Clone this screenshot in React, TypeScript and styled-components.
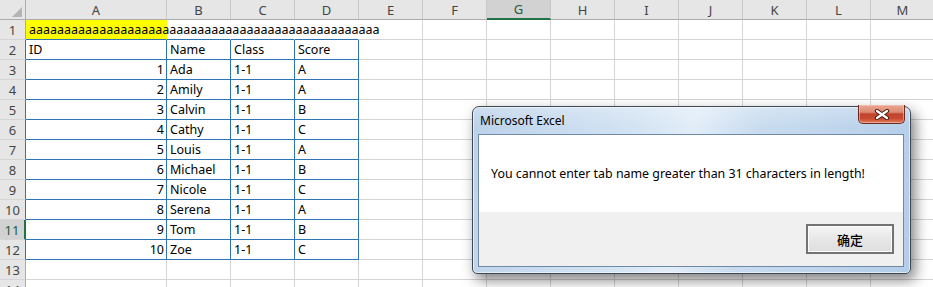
import React from "react";
import styled, { createGlobalStyle } from "styled-components";

const GlobalStyle = createGlobalStyle`
  html, body {
    margin: 0;
    padding: 0;
    background: #ffffff;
    overflow: hidden;
  }
  body {
    font-family: "Noto Sans", "Noto Sans CJK SC", sans-serif;
  }
`;

const GRID = "#d4d4d4";
const HEAD_LINE = "#c8c8c8";
const BLUE = "#2e75b6";
const GREEN = "#217346";

const COLS = ["A", "B", "C", "D", "E", "F", "G", "H", "I", "J", "K", "L", "M"];

const PEOPLE = [
  ["Ada", "A"],
  ["Amily", "A"],
  ["Calvin", "B"],
  ["Cathy", "C"],
  ["Louis", "A"],
  ["Michael", "B"],
  ["Nicole", "C"],
  ["Serena", "A"],
  ["Tom", "B"],
  ["Zoe", "C"],
];

// row index -> cell values (column 1 = A)
const DATA: Record<number, string[]> = {
  2: ["ID", "Name", "Class", "Score"],
};
PEOPLE.forEach(([name, score], i) => {
  DATA[i + 3] = [String(i + 1), name, "1-1", score];
});

const inTable = (r: number, c: number) => r >= 2 && r <= 12 && c >= 1 && c <= 4;

const Page = styled.div`
  position: relative;
  width: 933px;
  height: 287px;
  overflow: hidden;
`;

const Sheet = styled.div`
  display: grid;
  grid-template-columns: 26px 141px repeat(12, 64px);
  grid-auto-rows: 20px;
  font-size: 12.5px;
  color: #000;
`;

const HeadCell = styled.div<{ $sel?: boolean; $rb?: string; $bb?: string }>`
  box-sizing: border-box;
  display: flex;
  align-items: center;
  justify-content: center;
  background: ${(p) => (p.$sel ? "#d2d2d2" : "#e6e6e6")};
  color: ${(p) => (p.$sel ? "#1f5c3a" : "#444444")};
  border-right: 1px solid ${(p) => p.$rb || HEAD_LINE};
  border-bottom: 1px solid ${(p) => p.$bb || HEAD_LINE};
  font-size: 13px;
`;

const ColHead = styled(HeadCell)`
  border-bottom: ${(p) => (p.$sel ? `2px solid ${GREEN}` : `1px solid #ababab`)};
`;

const RowHead = styled(HeadCell)`
  border-right: ${(p) => (p.$sel ? `2px solid ${GREEN}` : `1px solid ${p.$rb || "#ababab"}`)};
`;

const Corner = styled.div`
  box-sizing: border-box;
  background: #e6e6e6;
  border-right: 1px solid #ababab;
  border-bottom: 1px solid #ababab;
  display: flex;
  align-items: flex-end;
  justify-content: flex-end;
  padding: 0 3px 2px 0;
`;

const Cell = styled.div<{ $rb: string; $bb: string; $bg?: string; $right?: boolean; $spill?: boolean }>`
  box-sizing: border-box;
  background: ${(p) => p.$bg || "#ffffff"};
  border-right: 1px solid ${(p) => p.$rb};
  border-bottom: 1px solid ${(p) => p.$bb};
  padding: 0 2px 0 3px;
  line-height: 19px;
  white-space: nowrap;
  text-align: ${(p) => (p.$right ? "right" : "left")};
  overflow: ${(p) => (p.$spill ? "visible" : "hidden")};
  ${(p) => (p.$spill ? "position: relative; z-index: 1;" : "")}
`;

/* ---------- dialog ---------- */

const Dialog = styled.div`
  position: absolute;
  left: 472px;
  top: 106px;
  width: 439px;
  height: 168px;
  box-sizing: border-box;
  border: 1px solid #3e4954;
  border-radius: 7px 7px 5px 5px;
  background: linear-gradient(
      to bottom,
      rgba(255, 255, 255, 0.25) 0px,
      rgba(255, 255, 255, 0) 20px
    ),
    linear-gradient(100deg, #bcd2ea 0%, #d3e3f3 35%, #e2edf8 48%, #c9dcef 62%, #b3cde9 100%);
  box-shadow: 4px 6px 14px rgba(0, 0, 0, 0.5), inset 0 0 0 1px rgba(255, 255, 255, 0.55);
  padding: 0 6px 6px 5px;
  display: flex;
  flex-direction: column;
  font-family: "Noto Sans", "Noto Sans CJK SC", sans-serif;
  z-index: 5;
`;

const TitleBar = styled.div`
  height: 27px;
  display: flex;
  justify-content: space-between;
  align-items: flex-start;
`;

const Title = styled.div`
  line-height: 27px;
  padding-left: 2px;
  font-size: 12px;
  color: #000;
`;

const CloseButton = styled.div`
  width: 47px;
  height: 19px;
  margin: -2px -1px 0 0;
  box-sizing: border-box;
  border: 1px solid #6b2a22;
  border-top: none;
  border-radius: 0 0 5px 5px;
  background: linear-gradient(
    to bottom,
    #e9a693 0%,
    #dd8a72 40%,
    #c2432c 50%,
    #c94a30 75%,
    #df7d5e 100%
  );
  box-shadow: inset 0 0 0 1px rgba(255, 210, 200, 0.5);
  display: flex;
  align-items: center;
  justify-content: center;
`;

const Client = styled.div`
  flex: 1;
  display: flex;
  flex-direction: column;
  border: 1px solid #6f89a6;
  background: #ffffff;
`;

const Message = styled.div`
  flex: 1;
  display: flex;
  align-items: center;
  padding-left: 12px;
  font-size: 12.4px;
  color: #000;
`;

const Footer = styled.div`
  height: 54px;
  box-sizing: border-box;
  background: #f0f0f0;
  display: flex;
  justify-content: flex-end;
  align-items: flex-start;
  padding: 12px 9px 0 0;
`;

const Button = styled.button`
  width: 88px;
  height: 30px;
  box-sizing: border-box;
  border: 2px solid #737373;
  background: linear-gradient(to bottom, #f5f5f5, #e7e7e7 50%, #dedede 100%);
  box-shadow: inset 0 0 0 1px #fbfbfb;
  font-family: "Noto Sans CJK SC", sans-serif;
  font-size: 13px;
  font-weight: 500;
  color: #000;
  padding: 0;
`;

const CloseGlyph = () => (
  <svg width="16" height="11" viewBox="0 0 16 11">
    <path d="M3 2 L13 9 M13 2 L3 9" stroke="#4a1a14" strokeWidth="4.2" strokeLinecap="round" />
    <path d="M3 2 L13 9 M13 2 L3 9" stroke="#ffffff" strokeWidth="2.2" strokeLinecap="round" />
  </svg>
);

const CornerMark = () => (
  <svg width="10" height="10" viewBox="0 0 10 10">
    <polygon points="10,0 10,10 0,10" fill="#b4b4b4" />
  </svg>
);

const ROWS = 14;

export default function App() {
  const cells: React.ReactNode[] = [];

  cells.push(
    <Corner key="corner">
      <CornerMark />
    </Corner>
  );
  COLS.forEach((c) => {
    cells.push(
      <ColHead key={`h${c}`} $sel={c === "G"}>
        {c}
      </ColHead>
    );
  });

  for (let r = 1; r <= ROWS; r++) {
    cells.push(
      <RowHead key={`r${r}`} $sel={r === 11} $rb={inTable(r, 1) ? BLUE : undefined} $bb="#d5d5d5">
        {r}
      </RowHead>
    );
    for (let c = 1; c <= COLS.length; c++) {
      const blueR = inTable(r, c) || inTable(r, c + 1);
      const blueB = inTable(r, c) || inTable(r + 1, c);
      let rb = blueR ? BLUE : GRID;
      const bb = blueB ? BLUE : GRID;
      let text = "";
      let bg: string | undefined;
      let spill = false;
      if (r === 1) {
        // A1 text spills over B1:E1, which hides those grid lines
        if (c <= 4) rb = c === 1 ? "#ffff00" : "#ffffff";
        if (c === 1) {
          text = "a".repeat(50);
          bg = "#ffff00";
          spill = true;
        }
      }
      const row = DATA[r];
      if (row && c <= 4) text = row[c - 1];
      const right = c === 1 && r >= 3 && r <= 12;
      cells.push(
        <Cell key={`${r}-${c}`} $rb={rb} $bb={bb} $bg={bg} $right={right} $spill={spill}>
          {text}
        </Cell>
      );
    }
  }

  return (
    <Page>
      <GlobalStyle />
      <Sheet>{cells}</Sheet>
      <Dialog>
        <TitleBar>
          <Title>Microsoft Excel</Title>
          <CloseButton>
            <CloseGlyph />
          </CloseButton>
        </TitleBar>
        <Client>
          <Message>You cannot enter tab name greater than 31 characters in length!</Message>
          <Footer>
            <Button>确定</Button>
          </Footer>
        </Client>
      </Dialog>
    </Page>
  );
}
